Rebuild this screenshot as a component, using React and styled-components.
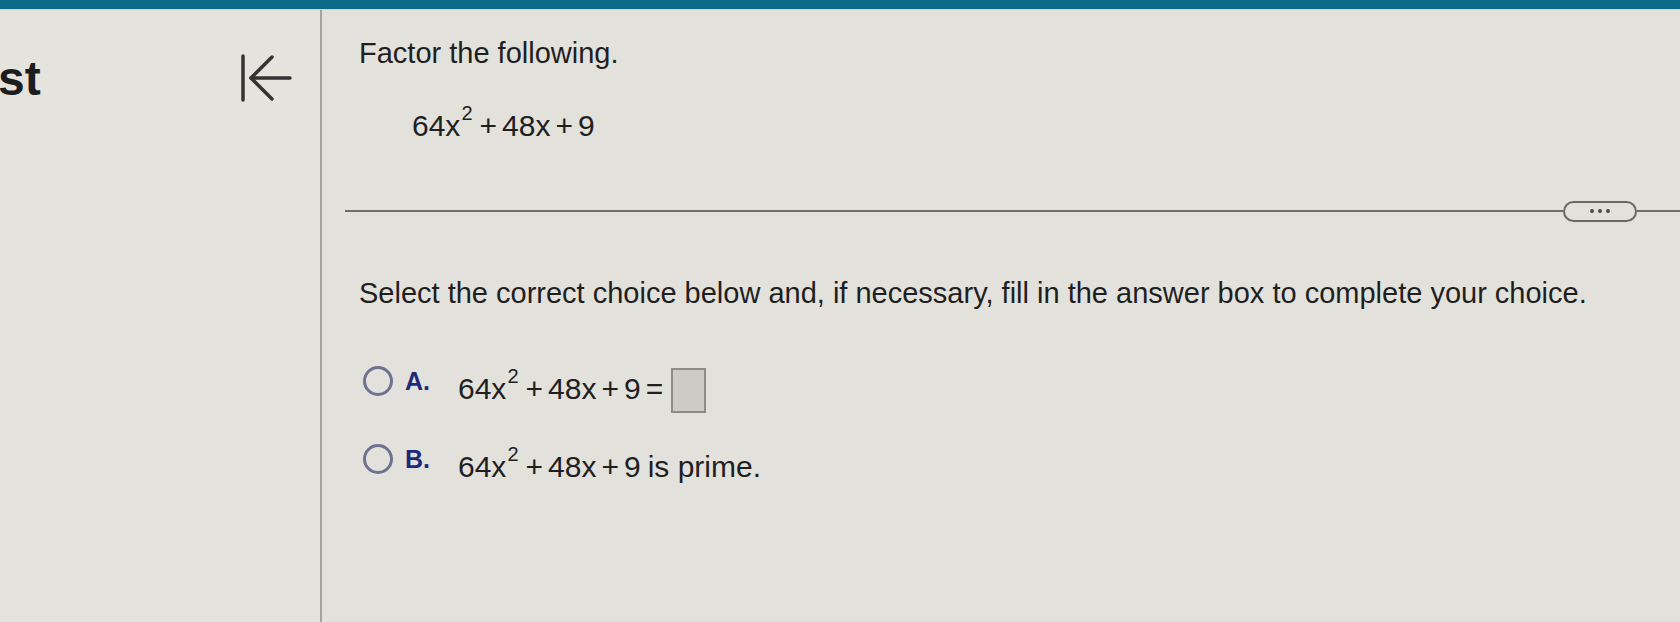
import styled, { createGlobalStyle } from 'styled-components';

const GlobalStyle = createGlobalStyle`
  html, body {
    margin: 0;
    padding: 0;
    background: #e3e1db;
  }
  body {
    font-family: "Liberation Sans", Arial, sans-serif;
    color: #1f1f1f;
  }
`;

// 화면 전체
const Page = styled.div`
  width: 1680px;
  height: 622px;
  overflow: hidden;
  display: flex;
  flex-direction: column;
  background: #e3e1db;
`;

// 상단 청록색 바
const TopBar = styled.div`
  height: 9px;
  background: #0d6a86;
  border-bottom: 1px solid #c4d3d8;
  flex-shrink: 0;
`;

const Body = styled.div`
  flex: 1;
  display: flex;
`;

// 왼쪽 영역
const Sidebar = styled.div`
  width: 322px;
  border-right: 2px solid #a4a39d;
  display: flex;
  justify-content: space-between;
  align-items: flex-start;
  padding: 43px 28px 0 0;
  box-sizing: border-box;
  background: #e5e3dd;
`;

const SideTitle = styled.div`
  font-size: 48px;
  font-weight: bold;
  line-height: 1;
  margin: 2px 0 0 -2px;
  color: #1d1d1d;
`;

const CollapseButton = styled.button`
  width: 52px;
  height: 50px;
  padding: 0;
  border: none;
  background: none;
  color: #333;
`;

// 문제 영역
const Main = styled.div`
  flex: 1;
  padding: 29px 0 0 23px;
  display: flex;
  flex-direction: column;
`;

const Prompt = styled.div`
  font-size: 29px;
  line-height: 29px;
  margin: ${p => p.$top || 0}px 0 0 14px;
`;

const MathLine = styled.div`
  display: flex;
  align-items: baseline;
  font-size: 30px;
  line-height: 30px;
  margin: ${p => p.$top || 0}px 0 0 ${p => p.$left || 0}px;
`;

const Sup = styled.span`
  font-size: 20px;
  position: relative;
  top: -16px;
  margin: 0 2px 0 1px;
`;

const Op = styled.span`
  margin: 0 5px;
`;

const Word = styled.span`
  margin-left: 7px;
`;

// 구분선
const DividerRow = styled.div`
  display: flex;
  align-items: center;
  height: 22px;
  margin-top: 56px;
`;

const Line = styled.div`
  height: 2px;
  background: #6e6e6c;
  flex: ${p => (p.$grow ? 1 : 'none')};
  width: ${p => (p.$grow ? 'auto' : '43px')};
`;

const MoreButton = styled.div`
  width: 74px;
  height: 21px;
  box-sizing: border-box;
  border: 2px solid #686866;
  border-radius: 11px;
  display: flex;
  align-items: center;
  justify-content: center;
  gap: 4px;
`;

const Dot = styled.span`
  width: 4px;
  height: 4px;
  border-radius: 50%;
  background: #4a4a4a;
`;

const Options = styled.div`
  display: flex;
  flex-direction: column;
  gap: 31px;
  margin: 58px 0 0 18px;
`;

const OptionRow = styled.div`
  display: flex;
  align-items: flex-start;
`;

const Radio = styled.span`
  width: 30px;
  height: 30px;
  box-sizing: border-box;
  border-radius: 50%;
  border: 3px solid #6d7290;
  flex-shrink: 0;
`;

const Letter = styled.span`
  width: 53px;
  margin-left: 12px;
  font-size: 25px;
  font-weight: bold;
  line-height: 30px;
  color: #1d2a7c;
`;

const AnswerGroup = styled.div`
  display: flex;
  align-items: center;
  margin-top: ${p => p.$offset}px;
`;

const AnswerBox = styled.span`
  width: 35px;
  height: 45px;
  box-sizing: border-box;
  border: 2px solid #8c8b88;
  background: #cdcbc5;
  margin-left: 3px;
`;

function Expression({ tail }) {
  return (
    <>
      64x<Sup>2</Sup>
      <Op>+</Op>48x<Op>+</Op>9{tail}
    </>
  );
}

function CollapseIcon() {
  return (
    <svg width="52" height="50" viewBox="0 0 52 50" fill="none" stroke="currentColor" strokeWidth="3.5" strokeLinecap="round">
      <line x1="3" y1="3" x2="3" y2="47" />
      <line x1="11" y1="25" x2="50" y2="25" />
      <polyline points="32,4 11,25 32,46" strokeLinejoin="round" />
    </svg>
  );
}

export default function App() {
  return (
    <Page>
      <GlobalStyle />
      <TopBar />
      <Body>
        <Sidebar>
          <SideTitle>st</SideTitle>
          <CollapseButton><CollapseIcon /></CollapseButton>
        </Sidebar>
        <Main>
          <Prompt>Factor the following.</Prompt>
          <MathLine $top={43} $left={67}>
            <Expression />
          </MathLine>
          <DividerRow>
            <Line $grow />
            <MoreButton><Dot /><Dot /><Dot /></MoreButton>
            <Line />
          </DividerRow>
          <Prompt $top={57}>
            Select the correct choice below and, if necessary, fill in the answer box to complete your choice.
          </Prompt>
          <Options>
            <OptionRow>
              <Radio />
              <Letter>A.</Letter>
              <AnswerGroup $offset={2}>
                <MathLine><Expression tail={<Op>=</Op>} /></MathLine>
                <AnswerBox />
              </AnswerGroup>
            </OptionRow>
            <OptionRow>
              <Radio />
              <Letter>B.</Letter>
              <AnswerGroup $offset={8}>
                <MathLine><Expression /><Word>is prime.</Word></MathLine>
              </AnswerGroup>
            </OptionRow>
          </Options>
        </Main>
      </Body>
    </Page>
  );
}
